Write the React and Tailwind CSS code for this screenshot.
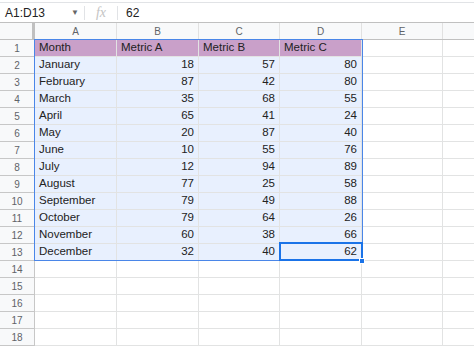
import React from 'react';

const rows = [
    ['Month', 'Metric A', 'Metric B', 'Metric C'],
    ['January', 18, 57, 80],
    ['February', 87, 42, 80],
    ['March', 35, 68, 55],
    ['April', 65, 41, 24],
    ['May', 20, 87, 40],
    ['June', 10, 55, 76],
    ['July', 12, 94, 89],
    ['August', 77, 25, 58],
    ['September', 79, 49, 88],
    ['October', 79, 64, 26],
    ['November', 60, 38, 66],
    ['December', 32, 40, 62],
];

const widths = ['w-[82px]', 'w-[82px]', 'w-[81px]', 'w-[82px]', 'w-[81px]', 'w-[60px]'];
const letters = ['A', 'B', 'C', 'D', 'E', ''];

export default function App() {
    return (
        <div className="w-[474px] h-[349px] overflow-hidden bg-white text-[#222] font-['Liberation_Sans',Arial,sans-serif]">
            {/* Formula bar */}
            <div className="h-[20px] border-t border-[#e1e3e6] mt-[2px] flex items-center text-[12px]">
                <div className="w-[84px] flex items-center justify-between pl-[5px] pr-[5px]">
                    <span>A1:D13</span>
                    <span className="text-[8px] text-[#666]">▼</span>
                </div>
                <div className="w-px h-[14px] bg-[#e1e3e6]" />
                <div className="w-[32px] text-center text-[14px] italic text-[#c4c4c4] font-['Liberation_Serif',serif]">fx</div>
                <div className="w-px h-[14px] bg-[#e1e3e6]" />
                <div className="pl-[8px]">62</div>
            </div>

            <div className="relative">
                {/* Column headers */}
                <div className="flex h-[18px] bg-[#f8f9fa] border-t border-b border-[#c0c0c0] text-[10px] text-[#5f6368]">
                    <div className="w-[35px] shrink-0 border-r-[3px] border-[#c0c0c0]" />
                    {letters.map((l, i) => (
                        <div key={i} className={`${widths[i]} shrink-0 border-r border-[#e1e1e1] flex items-center justify-center`}>{l}</div>
                    ))}
                </div>

                {/* Rows */}
                {Array.from({ length: 18 }).map((_, r) => {
                    const data = rows[r];
                    return (
                        <div key={r} className="flex h-[17px] text-[11.5px]">
                            <div className="w-[35px] shrink-0 bg-[#f8f9fa] border-r border-b border-[#c7c7c7] flex items-center justify-center text-[10px] text-[#5f6368]">{r + 1}</div>
                            {widths.map((w, c) => {
                                let bg = 'bg-white';
                                if (data && c < 4) bg = r === 0 ? 'bg-[#c9a0c9]' : 'bg-[#e8f0fe]';
                                const val = data && c < 4 ? data[c] : '';
                                const right = typeof val === 'number';
                                return (
                                    <div key={c} className={`${w} shrink-0 ${bg} border-r border-b border-[#e2e3e3] flex items-center px-[4px] ${right ? 'justify-end' : 'justify-start'}`}>
                                        {val}
                                    </div>
                                );
                            })}
                        </div>
                    );
                })}

                {/* Selection range A1:D13 */}
                <div className="absolute left-[34px] top-[17px] w-[329px] h-[222px] border border-[#4a86e8] pointer-events-none" />
                {/* Active cell D13 */}
                <div className="absolute left-[279px] top-[220px] w-[84px] h-[19px] border-2 border-[#1a73e8] pointer-events-none" />
                <div className="absolute left-[359px] top-[236px] w-[6px] h-[6px] bg-[#1a73e8] border border-white" />
            </div>
        </div>
    );
}
